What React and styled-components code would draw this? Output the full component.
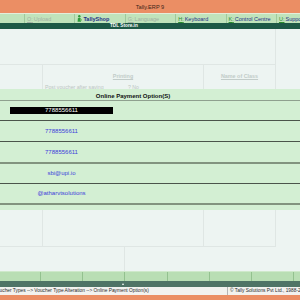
import styled, { createGlobalStyle } from 'styled-components';

const GlobalStyle = createGlobalStyle`
  * { box-sizing: border-box; }
  html, body { margin: 0; padding: 0; }
  body { font-family: "Liberation Sans", Arial, sans-serif; }
`;

const LINE = '#dfe6e4';

const Screen = styled.div`
  width: 300px;
  height: 300px;
  overflow: hidden;
  display: flex;
  flex-direction: column;
  background: #edf4f2;
`;

const TitleBar = styled.div`
  flex: 0 0 14px;
  background: #eb8e64;
  border-bottom: 1px solid #e3eedb;
  display: flex;
  align-items: center;
  justify-content: center;
  font-size: 5.6px;
  color: #3b2418;
`;

const ButtonBar = styled.div`
  flex: 0 0 9px;
  background: #c0e3bb;
  display: flex;
  overflow: hidden;
`;

const Spacer = styled.div`
  flex: 0 0 ${p => p.w}px;
`;

const Btn = styled.div`
  flex: 0 0 ${p => p.w}px;
  border-left: 1px solid #9fc99c;
  padding-left: 2px;
  display: flex;
  align-items: center;
  gap: 1px;
  font-size: 5.5px;
  white-space: nowrap;
  font-weight: ${p => (p.bold ? 'bold' : 'normal')};
  color: ${p => (p.off ? '#a3b0a3' : '#1f2d86')};
`;

const Key = styled.span`
  color: ${p => (p.off ? '#a3b0a3' : '#2c8c2c')};
  text-decoration: underline;
`;

const DarkBar = styled.div`
  flex: 0 0 6px;
  background: #1d5946;
  color: #fff;
  font-size: 4.7px;
  font-weight: bold;
  line-height: 6px;
  padding-left: 110px;
  white-space: nowrap;
`;

const Main = styled.div`
  flex: 1;
  display: flex;
  flex-direction: column;
  min-height: 0;
`;

const Band = styled.div`
  flex: 0 0 ${p => p.h}px;
  display: flex;
  overflow: hidden;
`;

const Frame = styled.div`
  flex: 0 0 ${p => p.w}px;
  display: flex;
  border-right: 1px solid ${LINE};
  border-bottom: ${p => (p.open ? 'none' : `1px solid ${LINE}`)};
`;

const Col = styled.div`
  flex: 0 0 ${p => p.w}px;
  border-right: ${p => (p.last ? 'none' : `1px solid ${LINE}`)};
  display: flex;
  flex-direction: column;
  align-items: ${p => (p.center ? 'center' : 'flex-start')};
  padding-top: 8px;
  color: #bcc6c3;
`;

const Heading = styled.div`
  font-size: 5.4px;
  font-weight: bold;
  text-decoration: underline;
  color: #c2ccc9;
`;

const FieldLine = styled.div`
  align-self: stretch;
  margin-top: 5px;
  padding-left: 2px;
  display: flex;
  font-size: 5.2px;
  white-space: nowrap;
  color: #bcc6c3;
`;

const FieldLabel = styled.span`
  width: 83px;
`;

const Panel = styled.div`
  flex: 0 0 121px;
  background: #d3efd3;
  display: flex;
  flex-direction: column;
`;

const PanelHeader = styled.div`
  flex: 0 0 12px;
  border-bottom: 1px solid #8fa08f;
  display: flex;
  align-items: flex-end;
  padding-bottom: 1px;
`;

const PanelTitle = styled.div`
  width: 266px;
  text-align: center;
  font-size: 6px;
  font-weight: bold;
  color: #111;
  line-height: 6px;
`;

const Row = styled.div`
  flex: 0 0 ${p => p.h}px;
  display: flex;
  align-items: center;
  border-bottom: ${p => (p.heavy ? '2px solid #82937f' : '1px solid #4b544b')};
`;

const Value = styled.div`
  margin-left: 10px;
  width: 103px;
  height: 7px;
  line-height: 7px;
  text-align: center;
  font-size: 6px;
  white-space: nowrap;
  background: ${p => (p.active ? '#000' : 'transparent')};
  color: ${p => (p.active ? '#fff' : '#3d3ddb')};
`;

const BottomBar = styled.div`
  flex: 0 0 10px;
  background: #b9deb4;
  border-top: 1px solid #cfe9cb;
  display: flex;
  overflow: hidden;
`;

const Slot = styled.div`
  flex: 0 0 42.2px;
  border-left: 1px solid #93c18f;
`;

const BottomDark = styled.div`
  flex: 0 0 6px;
  background: #4f7466;
  display: flex;
  align-items: center;
  padding-left: 122px;
`;

const Up = styled.div`
  width: 0;
  height: 0;
  border-left: 1.5px solid transparent;
  border-right: 1.5px solid transparent;
  border-bottom: 2px solid #fff;
`;

const StatusBar = styled.div`
  flex: 0 0 8px;
  background: #f2f2ef;
  display: flex;
  font-size: 4.8px;
  line-height: 8px;
  color: #2a2a2a;
  white-space: nowrap;
`;

const Trail = styled.div`
  flex: 0 0 228px;
  overflow: hidden;
  border-right: 1px solid #b5b5b5;
  text-indent: -6px;
`;

const Copy = styled.div`
  padding-left: 2px;
  overflow: hidden;
`;

const Foot = styled.div`
  flex: 0 0 5px;
  background: #eb8e64;
`;

const ShopIcon = () => (
  <svg width="5" height="7" viewBox="0 0 5 7">
    <circle cx="2.3" cy="1.3" r="1.2" fill="#2f9a3a" />
    <path d="M0.6 6.8 L0.9 3.2 Q2.3 2.5 3.7 3.2 L4 6.8 Z" fill="#2f9a3a" />
    <rect x="3.3" y="4" width="1.6" height="1.8" fill="#7cc36f" />
  </svg>
);

const topButtons = [
  { key: 'O', label: 'Upload', off: true },
  { label: 'TallyShop', shop: true },
  { key: 'G', label: 'Language', off: true },
  { key: 'H', label: 'Keyboard' },
  { key: 'K', label: 'Control Centre' },
  { key: 'U', label: 'Support' },
];

const options = [
  { text: '7788556611', active: true, h: 20 },
  { text: '7788556611', h: 21 },
  { text: '7788556611', heavy: true, h: 22 },
  { text: 'sbi@upi.io', h: 20 },
  { text: '@atharvtsolutions', heavy: true, h: 21 },
];

export default function App() {
  return (
    <>
      <GlobalStyle />
      <Screen>
        <TitleBar>Tally.ERP 9</TitleBar>
        <ButtonBar>
          <Spacer w={24} />
          {topButtons.map(b => (
            <Btn key={b.label} w={50.4} off={b.off} bold={b.shop}>
              {b.shop ? <ShopIcon /> : <Key off={b.off}>{b.key}:</Key>}
              <span>{b.label}</span>
            </Btn>
          ))}
        </ButtonBar>
        <DarkBar>TDL Store.in</DarkBar>

        <Main>
          <Band h={36}>
            <Frame w={276} />
          </Band>
          <Band h={24}>
            <Frame w={276} open>
              <Col w={43} />
              <Col w={161} center>
                <Heading>Printing</Heading>
                <FieldLine>
                  <FieldLabel>Post voucher after saving</FieldLabel>
                  <span>? No</span>
                </FieldLine>
              </Col>
              <Col w={71} center last>
                <Heading>Name of Class</Heading>
              </Col>
            </Frame>
          </Band>

          <Panel>
            <PanelHeader>
              <PanelTitle>Online Payment Option(S)</PanelTitle>
            </PanelHeader>
            {options.map((o, i) => (
              <Row key={i} h={o.h} heavy={o.heavy}>
                <Value active={o.active}>{o.text}</Value>
              </Row>
            ))}
          </Panel>

          <Band h={37}>
            <Frame w={276}>
              <Col w={43} />
              <Col w={161} />
              <Col w={71} last />
            </Frame>
          </Band>
          <Band h={24}>
            <Col w={125} />
          </Band>
        </Main>

        <BottomBar>
          <Spacer w={40} />
          {Array.from({ length: 7 }).map((_, i) => (
            <Slot key={i} />
          ))}
        </BottomBar>
        <BottomDark>
          <Up />
        </BottomDark>
        <StatusBar>
          <Trail>Voucher Types --&gt; Voucher Type Alteration --&gt; Online Payment Option(s)</Trail>
          <Copy>© Tally Solutions Pvt Ltd., 1988-2018</Copy>
        </StatusBar>
        <Foot />
      </Screen>
    </>
  );
}
